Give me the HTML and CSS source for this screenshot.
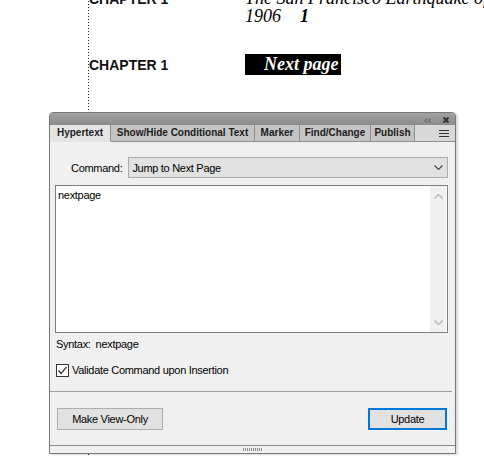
FILE: index.html
```html
<!DOCTYPE html>
<html lang="en">
<head>
    <meta charset="UTF-8">
    <meta name="viewport" content="width=device-width, initial-scale=1.0">
    <title>Hypertext</title>
    <link rel="stylesheet" href="styles.css">
</head>
<body>
    <div class="doc">
        <div class="chapter first">
            <div class="chapter-label">CHAPTER 1</div>
            <div class="chapter-title">The San Francisco Earthquake of<br>1906<b class="page-num">1</b></div>
        </div>
        <div class="chapter">
            <div class="chapter-label">CHAPTER 1</div>
            <div class="chapter-title"><span class="xref">Next page</span></div>
        </div>
    </div>

    <!-- floating Hypertext palette -->
    <div class="palette">
        <div class="palette-titlebar">
            <svg class="tb-icon" width="7" height="5" viewBox="0 0 7 5">
                <polyline points="3,0.5 1,2.5 3,4.5" fill="none" stroke="#4a4a4a" stroke-width="1"/>
                <polyline points="6.5,0.5 4.5,2.5 6.5,4.5" fill="none" stroke="#4a4a4a" stroke-width="1"/>
            </svg>
            <svg class="tb-icon close" width="6" height="6" viewBox="0 0 6 6">
                <path d="M0.5 0.5 L5.5 5.5 M5.5 0.5 L0.5 5.5" stroke="#2a2a2a" stroke-width="1.8"/>
            </svg>
        </div>
        <div class="palette-tabs">
            <div class="tab tab-hypertext active">Hypertext</div>
            <div class="tab tab-conditional">Show/Hide Conditional Text</div>
            <div class="tab tab-marker">Marker</div>
            <div class="tab tab-find">Find/Change</div>
            <div class="tab tab-publish">Publish</div>
            <div class="tab-fill">
                <svg width="10" height="7" viewBox="0 0 10 7">
                    <path d="M0 0.5 H10 M0 3.5 H10 M0 6.5 H10" stroke="#333" stroke-width="1"/>
                </svg>
            </div>
        </div>
        <div class="palette-body">
            <div class="field-row">
                <span class="field-label">Command:</span>
                <div class="dropdown">
                    <span>Jump to Next Page</span>
                    <svg width="9" height="5" viewBox="0 0 9 5">
                        <polyline points="0.5,0.5 4.5,4.5 8.5,0.5" fill="none" stroke="#444" stroke-width="1.1"/>
                    </svg>
                </div>
            </div>
            <div class="command-box">
                <div class="command-text">nextpage</div>
                <div class="scrollbar">
                    <svg width="9" height="5" viewBox="0 0 9 5">
                        <polyline points="0.5,4.5 4.5,0.5 8.5,4.5" fill="none" stroke="#bdbdbd" stroke-width="1.6"/>
                    </svg>
                    <svg width="9" height="5" viewBox="0 0 9 5">
                        <polyline points="0.5,0.5 4.5,4.5 8.5,0.5" fill="none" stroke="#bdbdbd" stroke-width="1.6"/>
                    </svg>
                </div>
            </div>
            <div class="syntax">Syntax:<span class="syntax-value">nextpage</span></div>
            <label class="check-row">
                <span class="checkbox">
                    <svg width="11" height="11" viewBox="0 0 11 11">
                        <polyline points="1.5,5.5 4,8.5 9.5,2" fill="none" stroke="#333" stroke-width="1.2"/>
                    </svg>
                </span>
                Validate Command upon Insertion
            </label>
            <div class="divider"></div>
            <div class="button-row">
                <button class="btn">Make View-Only</button>
                <button class="btn btn-default">Update</button>
            </div>
        </div>
        <div class="palette-footer"><span class="grip"></span></div>
    </div>
</body>
</html>
```

FILE: styles.css
```css
body {
    margin: 0;
    height: 468px;
    overflow: hidden;
    background: #fff;
    position: relative;
}

/* document page behind the palette */
.doc {
    margin-left: 88px;
    padding-left: 1px;
    height: 468px;
    background: repeating-linear-gradient(to bottom, #222 0 1px, transparent 1px 3px) no-repeat left top / 1px 100%;
    white-space: nowrap;
}

.chapter {
    display: flex;
    align-items: baseline;
}

.chapter.first {
    margin-top: -11px;
}

.chapter + .chapter {
    margin-top: 29px;
}

.chapter-label {
    width: 156px;
    flex: none;
    font-family: "Liberation Sans", Arial, sans-serif;
    font-weight: bold;
    font-size: 14px;
    color: #111;
}

.chapter-title {
    font-family: "Liberation Serif", "Times New Roman", serif;
    font-style: italic;
    font-size: 18px;
    line-height: 18px;
    color: #000;
}

.page-num {
    margin-left: 19px;
}

.xref {
    display: inline-block;
    width: 77px;
    height: 21px;
    line-height: 21px;
    padding-left: 19px;
    background: #000;
    color: #fff;
    font-weight: bold;
    font-size: 18px;
}

/* palette window */
.palette {
    position: absolute;
    left: 49px;
    top: 112px;
    width: 407px;
    height: 342px;
    box-sizing: border-box;
    border: 1px solid #777;
    border-radius: 4px 4px 0 0;
    background: #f0f0f0;
    box-shadow: 2px 1px 2px rgba(0, 0, 0, 0.15);
    display: flex;
    flex-direction: column;
    font-family: "Liberation Sans", Arial, sans-serif;
    font-size: 11px;
    letter-spacing: -0.3px;
    color: #000;
}

.palette-titlebar {
    height: 12px;
    flex: none;
    border-radius: 3px 3px 0 0;
    background: linear-gradient(#a2a2a2, #8b8b8b);
    display: flex;
    align-items: center;
    justify-content: flex-end;
    gap: 12px;
    padding-right: 6px;
    padding-top: 2px;
    box-sizing: border-box;
}

.tb-icon {
    display: block;
}

.palette-tabs {
    height: 17px;
    flex: none;
    display: flex;
    background: #c3c3c3;
}

.tab {
    flex: none;
    text-align: center;
    line-height: 16px;
    font-size: 10px;
    font-weight: bold;
    letter-spacing: 0;
    color: #1c1c1c;
    background: #c4c4c4;
    border-right: 1px solid #8e8e8e;
    border-bottom: 1px solid #8e8e8e;
}

.tab-hypertext { width: 60px; }
.tab-conditional { width: 143px; }
.tab-marker { width: 44px; }
.tab-find { width: 70px; }
.tab-publish { width: 43px; }

.tab.active {
    background: #e4e4e4;
    border-bottom-color: #e4e4e4;
}

.tab-fill {
    flex: 1;
    background: #d8d8d8;
    border-bottom: 1px solid #8e8e8e;
    display: flex;
    align-items: center;
    justify-content: flex-end;
    padding-right: 6px;
}

.tab-fill svg {
    display: block;
}

.palette-body {
    height: 303px;
    flex: none;
    box-sizing: border-box;
    padding: 15px 7px 15px 5px;
    display: flex;
    flex-direction: column;
}

.field-row {
    display: flex;
    align-items: center;
    gap: 6px;
    height: 21px;
}

.field-label {
    padding-left: 16px;
}

.dropdown {
    flex: 1;
    height: 21px;
    box-sizing: border-box;
    border: 1px solid #adadad;
    background: #e1e1e1;
    display: flex;
    align-items: center;
    justify-content: space-between;
    padding: 0 4px 0 3px;
}

.command-box {
    margin-top: 7px;
    height: 148px;
    box-sizing: border-box;
    border: 1px solid #7f7f7f;
    background: #fff;
    display: flex;
}

.command-text {
    flex: 1;
    padding: 3px 2px;
}

.scrollbar {
    width: 16px;
    margin-right: 1px;
    background: #f0f0f0;
    display: flex;
    flex-direction: column;
    align-items: center;
    justify-content: space-between;
    padding: 8px 0 7px;
}

.scrollbar svg {
    display: block;
}

.syntax {
    margin-top: 4px;
    line-height: 14px;
    padding-left: 1px;
}

.syntax-value {
    margin-left: 5px;
}

.check-row {
    margin-top: 13px;
    height: 13px;
    line-height: 13px;
    padding-left: 1px;
    display: flex;
    align-items: center;
    gap: 3px;
}

.checkbox {
    width: 13px;
    height: 13px;
    box-sizing: border-box;
    border: 1px solid #333;
    background: #fff;
    display: flex;
    align-items: center;
    justify-content: center;
}

.divider {
    margin: 14px -4px 0 -5px;
    height: 1px;
    background: #a0a0a0;
}

.button-row {
    margin-top: 16px;
    display: flex;
    justify-content: space-between;
    padding: 0 1px 0 2px;
}

.btn {
    height: 22px;
    box-sizing: border-box;
    border: 1px solid #adadad;
    background: #e1e1e1;
    font: inherit;
    letter-spacing: inherit;
    color: #000;
    padding: 0;
}

.btn:first-child {
    width: 106px;
}

.btn-default {
    width: 79px;
    border: 2px solid #0078d7;
}

.palette-footer {
    height: 8px;
    flex: none;
    box-sizing: border-box;
    border-top: 1px solid #8a8a8a;
    display: flex;
    justify-content: center;
    align-items: center;
}

.grip {
    width: 19px;
    height: 3px;
    background: repeating-linear-gradient(to right, #8a8a8a 0 1px, transparent 1px 2px);
}
```
